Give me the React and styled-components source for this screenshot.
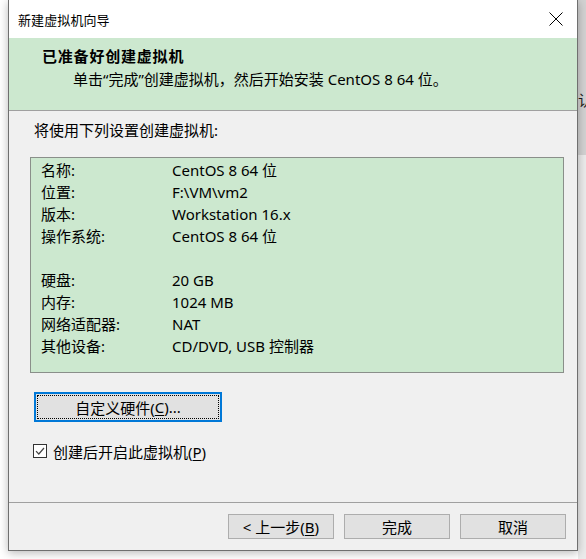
import React from "react";
import styled, { createGlobalStyle } from "styled-components";

const GlobalStyle = createGlobalStyle`
  html, body {
    margin: 0;
    padding: 0;
    background: #ffffff;
    overflow: hidden;
  }
  body {
    font-family: "Noto Sans", "Noto Sans CJK SC", sans-serif;
    color: #000;
  }
`;

const Desktop = styled.div`
  display: flex;
  width: 586px;
  height: 559px;
  overflow: hidden;
`;

const Window = styled.div`
  display: flex;
  flex-direction: column;
  flex: none;
  width: 570px;
  height: 551px;
  margin-left: 8px;
  box-sizing: border-box;
  border: 1px solid #6f6f6f;
  border-top: none;
  background: #f0f0f0;
  box-shadow: 0 2px 9px rgba(0, 0, 0, 0.28);
  position: relative;
  z-index: 1;
`;

const Backdrop = styled.div`
  flex: 1;
  display: flex;
  flex-direction: column;
`;

const BackdropTop = styled.div`
  height: 155px;
  background: #d2d2d2;
  font-family: "Noto Sans CJK SC", sans-serif;
  font-size: 15px;
  line-height: 22px;
  color: #1a1a1a;
  padding-top: 89px;
  box-sizing: border-box;
  white-space: nowrap;
  overflow: hidden;
`;

const BackdropRest = styled.div`
  flex: 1;
  background: #ebebeb;
`;

const TitleBar = styled.div`
  display: flex;
  align-items: center;
  justify-content: space-between;
  height: 38px;
  flex: none;
  background: #ffffff;
  padding: 0 14px 0 9px;
  font-size: 13px;
`;

const TitleText = styled.span`
  font-family: "Noto Sans CJK SC", sans-serif;
  letter-spacing: 0.1px;
`;

const Header = styled.div`
  flex: none;
  height: 73px;
  box-sizing: border-box;
  background: #cce8cf;
  border-bottom: 1px solid #a0a0a0;
  padding: 7px 0 0 33px;
`;

const HeaderTitle = styled.div`
  font-size: 15px;
  font-weight: 700;
  line-height: 22px;
  font-family: "Noto Sans CJK SC", sans-serif;
  letter-spacing: 0.8px;
`;

const HeaderSub = styled.div`
  font-size: 15px;
  line-height: 22px;
  margin: 1px 0 0 31px;
`;

const Content = styled.div`
  flex: 1;
  display: flex;
  flex-direction: column;
  align-items: flex-start;
  padding: 8px 0 0 21px;
`;

const Intro = styled.div`
  font-size: 15px;
  line-height: 22px;
  margin-left: 4px;
`;

const SummaryPanel = styled.div`
  width: 534px;
  height: 216px;
  box-sizing: border-box;
  margin-top: 16px;
  background: #cce8cf;
  border: 1px solid #8a8f8a;
  padding: 1px 0 15px 10px;
`;

const Row = styled.div`
  display: grid;
  grid-template-columns: 131px 1fr;
  height: 22px;
  line-height: 22px;
  font-size: 15px;
`;

const Spacer = styled.div`
  height: 22px;
`;

const PushButton = styled.button`
  display: flex;
  align-items: center;
  justify-content: center;
  box-sizing: border-box;
  width: ${(p) => p.$width}px;
  height: ${(p) => p.$height}px;
  padding: 0;
  background: #e1e1e1;
  border: ${(p) => (p.$focused ? "2px solid #0078d7" : "1px solid #adadad")};
  outline: ${(p) => (p.$focused ? "1px dotted #000" : "none")};
  outline-offset: -4px;
  font-family: "Noto Sans", "Noto Sans CJK SC", sans-serif;
  font-size: 15px;
  color: #000;
  cursor: default;
`;

const HardwareButton = styled(PushButton)`
  margin: 19px 0 0 4px;
`;

const CheckRow = styled.label`
  display: flex;
  align-items: center;
  gap: 6px;
  height: 22px;
  margin: 18px 0 0 3px;
  font-size: 15px;
`;

const CheckBox = styled.span`
  display: flex;
  align-items: center;
  justify-content: center;
  width: 14px;
  height: 14px;
  box-sizing: border-box;
  border: 1px solid #333;
  background: #fff;
`;

const Key = styled.span`
  text-decoration: underline;
  text-underline-offset: 2px;
`;

const Footer = styled.div`
  flex: none;
  display: flex;
  justify-content: flex-end;
  gap: 10px;
  border-top: 1px solid #a0a0a0;
  padding: 11px 11px 11px 0;
`;

const rows = [
  ["名称:", "CentOS 8 64 位"],
  ["位置:", "F:\\VM\\vm2"],
  ["版本:", "Workstation 16.x"],
  ["操作系统:", "CentOS 8 64 位"],
  null,
  ["硬盘:", "20 GB"],
  ["内存:", "1024 MB"],
  ["网络适配器:", "NAT"],
  ["其他设备:", "CD/DVD, USB 控制器"],
];

const CloseIcon = () => (
  <svg width="14" height="14" viewBox="0 0 14 14">
    <path d="M0.5 0.5 L13.5 13.5 M13.5 0.5 L0.5 13.5" stroke="#000" strokeWidth="1" fill="none" />
  </svg>
);

const CheckMark = () => (
  <svg width="10" height="10" viewBox="0 0 10 10">
    <path d="M1 5.2 L3.8 8 L9 2" stroke="#444" strokeWidth="1.2" fill="none" />
  </svg>
);

export default function App() {
  return (
    <>
      <GlobalStyle />
      <Desktop>
        <Window>
          <TitleBar>
            <TitleText>新建虚拟机向导</TitleText>
            <CloseIcon />
          </TitleBar>
          <Header>
            <HeaderTitle>已准备好创建虚拟机</HeaderTitle>
            <HeaderSub>单击“完成”创建虚拟机，然后开始安装 CentOS 8 64 位。</HeaderSub>
          </Header>
          <Content>
            <Intro>将使用下列设置创建虚拟机:</Intro>
            <SummaryPanel>
              {rows.map((r, i) =>
                r ? (
                  <Row key={i}>
                    <span>{r[0]}</span>
                    <span>{r[1]}</span>
                  </Row>
                ) : (
                  <Spacer key={i} />
                )
              )}
            </SummaryPanel>
            <HardwareButton $width={188} $height={30} $focused>
              自定义硬件(<Key>C</Key>)...
            </HardwareButton>
            <CheckRow>
              <CheckBox>
                <CheckMark />
              </CheckBox>
              <span>
                创建后开启此虚拟机(<Key>P</Key>)
              </span>
            </CheckRow>
          </Content>
          <Footer>
            <PushButton $width={106} $height={25}>
              &lt; 上一步(<Key>B</Key>)
            </PushButton>
            <PushButton $width={106} $height={25}>
              完成
            </PushButton>
            <PushButton $width={106} $height={25}>
              取消
            </PushButton>
          </Footer>
        </Window>
        <Backdrop>
          <BackdropTop>认</BackdropTop>
          <BackdropRest />
        </Backdrop>
      </Desktop>
    </>
  );
}
